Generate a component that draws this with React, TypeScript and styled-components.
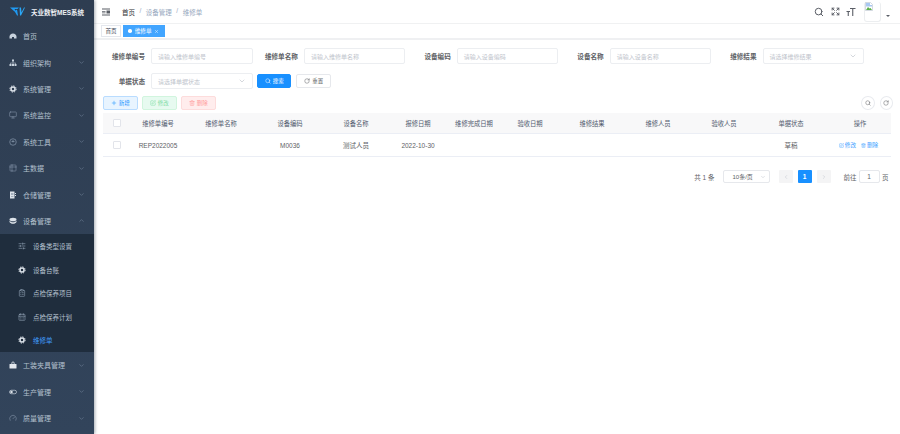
import React from 'react';
import styled, { createGlobalStyle } from 'styled-components';
import {
    ChevronDown, ChevronUp, ChevronLeft, ChevronRight, Search, RotateCw, Plus, SquarePen, Trash2,
    Expand, X, Monitor, Table2, SlidersHorizontal, ClipboardList, CalendarDays, Gauge,
} from 'lucide-react';

const GlobalStyle = createGlobalStyle`
    html, body { margin: 0; padding: 0; height: 100%; background: #fff; }
    body { font-family: "Liberation Sans", "Noto Sans CJK SC", sans-serif; overflow: hidden; }
    #root { height: 100%; }
`;

const Page = styled.div`
    display: flex;
    width: 900px;
    height: 434px;
    overflow: hidden;
`;

const Sidebar = styled.aside`
    width: 94px;
    flex: none;
    background: linear-gradient(#2e3d51, #32445b);
    box-shadow: 1px 0 3px rgba(0, 21, 41, 0.35);
    position: relative;
    z-index: 2;
    overflow: hidden;
`;

const Brand = styled.div`
    height: 23px;
    display: flex;
    align-items: center;
    padding-left: 10px;
    gap: 6px;
    color: #eef1f5;
    font-size: 6.5px;
    font-weight: 700;
    white-space: nowrap;
`;

const MenuRow = styled.div`
    height: 26.4px;
    display: flex;
    align-items: center;
    padding-left: 9px;
    color: #b4c0ce;
    font-size: 7px;
    gap: 6px;
    svg.chev { margin-left: auto; margin-right: 9px; color: #6f8096; }
`;

const SubMenu = styled.div`
    background: #1f2d3d;
`;

const SubRow = styled.div<{ $active?: boolean }>`
    height: 23.6px;
    display: flex;
    align-items: center;
    padding-left: 18px;
    gap: 7px;
    color: ${(p) => (p.$active ? '#409eff' : '#b4c0ce')};
    font-size: 6.5px;
    svg { color: #9fb0c3; }
`;

const Main = styled.main`
    flex: 1;
    min-width: 0;
    display: flex;
    flex-direction: column;
`;

const TopBar = styled.header`
    height: 23px;
    flex: none;
    display: flex;
    align-items: center;
    padding: 0 10px 0 8px;
    border-bottom: 1px solid #f0f1f2;
`;

const Crumbs = styled.nav`
    display: flex;
    gap: 4.5px;
    margin-left: 12px;
    font-size: 6.5px;
    color: #97a8be;
    b { font-weight: 400; color: #303133; }
`;

const TopIcons = styled.div`
    margin-left: auto;
    display: flex;
    align-items: center;
    gap: 6.5px;
    color: #5a5e66;
`;

const Avatar = styled.div`
    width: 17px;
    height: 20px;
    margin: 1px 0 0 1px;
    border-radius: 3px;
    border: 1px solid #eceef0;
    border-top: 0;
    box-sizing: border-box;
    line-height: 0;
`;

const Caret = styled.span`
    width: 0;
    height: 0;
    margin: 10px 0 0 -1px;
    border: 2px solid transparent;
    border-top-color: #5a5e66;
`;

const TagsBar = styled.div`
    height: 14px;
    flex: none;
    display: flex;
    align-items: center;
    gap: 2px;
    padding-left: 7px;
    border-bottom: 2px solid #eff0f2;
`;

const Tag = styled.span<{ $active?: boolean }>`
    height: 12px;
    display: flex;
    align-items: center;
    gap: 2px;
    box-sizing: border-box;
    padding: ${(p) => (p.$active ? '0 5px 0 4px' : '0 3.5px')};
    font-size: 5.6px;
    border: 1px solid ${(p) => (p.$active ? '#42a5ff' : '#e4e7ed')};
    background: ${(p) => (p.$active ? '#42a5ff' : '#fff')};
    color: ${(p) => (p.$active ? '#fff' : '#495060')};
`;

const Dot = styled.i`
    width: 3.5px;
    height: 3.5px;
    margin-right: 1px;
    border-radius: 50%;
    background: #fff;
`;

const Content = styled.section`
    padding: 8px 9px 0 9px;
`;

const FormGrid = styled.div`
    display: grid;
    grid-template-columns: repeat(5, 152.9px);
    row-gap: 9px;
`;

const Field = styled.label`
    display: flex;
    align-items: center;
    height: 16px;
`;

const FieldLabel = styled.span`
    width: 42px;
    margin-right: 6px;
    text-align: right;
    white-space: nowrap;
    font-size: 6.6px;
    font-weight: 700;
    color: #606266;
`;

const FieldBox = styled.span`
    width: 101.5px;
    height: 16px;
    box-sizing: border-box;
    padding: 0 6px;
    display: flex;
    align-items: center;
    justify-content: space-between;
    border: 1px solid #eceef1;
    border-radius: 2px;
    font-size: 6px;
    color: #c0c4cc;
`;

const FormActions = styled.div`
    grid-column: span 2;
    display: flex;
    align-items: center;
    gap: 5px;
    margin-left: 1px;
`;

const Btn = styled.button<{ $kind?: string }>`
    height: 14px;
    width: 34.5px;
    box-sizing: border-box;
    padding: 0;
    display: flex;
    align-items: center;
    justify-content: center;
    gap: 2px;
    font: inherit;
    font-size: 5.5px;
    border-radius: 2px;
    border: 1px solid ${(p) => ({
        search: '#1890ff', reset: '#e6e8ec', add: '#b9dcff', edit: '#d1f5de', del: '#fddcdc',
    }[p.$kind || 'reset'])};
    background: ${(p) => ({
        search: '#1890ff', reset: '#fff', add: '#e8f4ff', edit: '#e7faf0', del: '#ffeded',
    }[p.$kind || 'reset'])};
    color: ${(p) => ({
        search: '#fff', reset: '#606266', add: '#1890ff', edit: '#7fdca4', del: '#ff9a9a',
    }[p.$kind || 'reset'])};
`;

const Toolbar = styled.div`
    display: flex;
    align-items: center;
    gap: 4.5px;
    height: 14px;
    margin-top: 7px;
`;

const RoundButtons = styled.div`
    margin-left: auto;
    margin-right: -2px;
    display: flex;
    gap: 5px;
`;

const RoundBtn = styled.span`
    width: 13.5px;
    height: 14px;
    box-sizing: border-box;
    display: flex;
    align-items: center;
    justify-content: center;
    border: 1px solid #e9ebef;
    border-radius: 50%;
    color: #606266;
`;

const COLUMNS = '24px 62px 64px 74px 58px 66px 46px 66px 58px 74px 58px 76px 62px';

const Table = styled.div`
    margin-top: 3px;
    width: 788px;
`;

const HeadRow = styled.div`
    display: grid;
    grid-template-columns: ${COLUMNS};
    height: 21px;
    align-items: center;
    background: #f8f8f9;
    border-bottom: 1px solid #ebeef5;
    font-size: 6.3px;
    color: #515a6e;
    text-align: center;
    box-sizing: border-box;
`;

const BodyRow = styled(HeadRow)`
    height: 23px;
    background: #fff;
    color: #606266;
    font-size: 6.5px;
`;

const Check = styled.span`
    display: block;
    width: 7.5px;
    height: 7.5px;
    box-sizing: border-box;
    margin-left: 10px;
    background: #fff;
    border: 1px solid #e2e4ea;
    border-radius: 1px;
`;

const Ops = styled.span`
    display: flex;
    justify-content: center;
    gap: 5px;
    margin-right: 3px;
    color: #409eff;
    font-size: 5.6px;
    white-space: nowrap;
    span { display: flex; align-items: center; gap: 1px; }
`;

const Pager = styled.div`
    display: flex;
    align-items: center;
    justify-content: flex-end;
    height: 13px;
    margin-top: 13px;
    width: 785.5px;
    font-size: 6.5px;
    color: #606266;
`;

const SizeSelect = styled.span`
    width: 47px;
    height: 12.5px;
    box-sizing: border-box;
    margin: 0 9px 0 8px;
    padding: 0 3px 0 9px;
    display: flex;
    align-items: center;
    justify-content: space-between;
    border: 1px solid #e6e8ec;
    border-radius: 2px;
    font-size: 6px;
    svg { color: #c0c4cc; }
`;

const PageBtn = styled.span<{ $active?: boolean }>`
    width: 14px;
    height: 13px;
    margin-right: 5px;
    display: flex;
    align-items: center;
    justify-content: center;
    border-radius: 1px;
    font-weight: 700;
    background: ${(p) => (p.$active ? '#1890ff' : '#f4f4f5')};
    color: ${(p) => (p.$active ? '#fff' : '#c0c4cc')};
`;

const JumpLabel = styled.span`
    margin-left: 8px;
`;

const JumpBox = styled.span`
    width: 21px;
    height: 12.5px;
    box-sizing: border-box;
    margin: 0 2.5px 0 2px;
    display: flex;
    align-items: center;
    justify-content: center;
    border: 1px solid #e6e8ec;
    border-radius: 2px;
`;

const Logo = () => (
    <svg width="15" height="9" viewBox="0 0 30 18">
        <path d="M0 1h18l-3 3H9l2 3-2 2z" fill="#1f9bf5" />
        <path d="M9 8l5-3 2 12h-2z" fill="#1f9bf5" />
        <path d="M19 1h3l1 10 5-10h2l-8 16h-2z" fill="#2aa8f8" />
    </svg>
);

const HomeGlyph = () => (
    <svg width="8" height="8" viewBox="0 0 16 16" fill="#c8d2dd">
        <path d="M1 9c0-3 3-6 7-6s7 3 7 6v4H10V10H6v3H1z" />
    </svg>
);

const TreeGlyph = () => (
    <svg width="8" height="8" viewBox="0 0 16 16" fill="#c8d2dd">
        <rect x="6" y="1" width="4" height="4" />
        <rect x="1" y="10" width="4" height="4" />
        <rect x="6" y="10" width="4" height="4" />
        <rect x="11" y="10" width="4" height="4" />
        <path d="M7.500 5h1v2.500H13.500V10h-1V8.500h-4V10h-1V8.500h-4V10h-1V7.500h5z" />
    </svg>
);

const GearGlyph = () => (
    <svg width="8" height="8" viewBox="0 0 16 16" fill="none" stroke="#dde3ea">
        <circle cx="8" cy="8" r="4" strokeWidth="3" />
        <circle cx="8" cy="8" r="6.300" strokeWidth="2" strokeDasharray="2.600 2.350" />
    </svg>
);

const ToolGlyph = () => (
    <svg width="8" height="8" viewBox="0 0 16 16" fill="none" stroke="#8d9db1" strokeWidth="1.300">
        <circle cx="8" cy="8" r="6.500" />
        <path d="M8 4v5M5 7h6" />
    </svg>
);

const StoreGlyph = () => (
    <svg width="8" height="8" viewBox="0 0 16 16" fill="#dde3ea">
        <path d="M2 1h9v14H2zM12 4h2v2h-2zM12 8h2v2h-2z" />
        <path d="M4 4h5v1H4zM4 7h5v1H4zM4 10h5v1H4z" fill="#6d7c8f" />
    </svg>
);

const DiskGlyph = () => (
    <svg width="8" height="8" viewBox="0 0 16 16" fill="#dde3ea">
        <ellipse cx="8" cy="5" rx="7" ry="3.500" />
        <path d="M1 7c1 2.500 4 3.500 7 3.500S14 9.500 15 7v3c-1 2.500-4 3.500-7 3.500S2 12.500 1 10z" />
    </svg>
);

const LockGlyph = () => (
    <svg width="8" height="8" viewBox="0 0 16 16" fill="#e3e8ee">
        <path d="M5 6V4a3 3 0 0 1 6 0v2H9.500V4a1.500 1.500 0 0 0-3 0v2z" />
        <rect x="1" y="6" width="14" height="9" rx="1" />
    </svg>
);

const PillGlyph = () => (
    <svg width="8" height="8" viewBox="0 0 16 16">
        <rect x="1" y="4.500" width="14" height="7" rx="3.500" fill="none" stroke="#c8d2dd" strokeWidth="1.400" />
        <circle cx="5" cy="8" r="2.500" fill="#dde3ea" />
    </svg>
);

const CollapseGlyph = () => (
    <svg width="8" height="8" viewBox="0 0 16 16" fill="#5a5e66">
        <path d="M0 1h16v2H0zM0 13h16v2H0zM0 6h7v1.500H0zM0 9h7v1.500H0zM9 5h7v6H9z" />
    </svg>
);

const SizeGlyph = () => (
    <svg width="10" height="10" viewBox="0 0 20 20" fill="none" stroke="#5a5e66" strokeWidth="2.200">
        <path d="M8 3h11M13.500 3v15M1 9h7M4.500 9v9" />
    </svg>
);

const BrokenImage = () => (
    <svg width="8" height="9" viewBox="0 0 16 18">
        <path d="M1 1h10l4 4v12H1z" fill="#fff" stroke="#a9b4c2" />
        <path d="M2 2h8v4h4v3H2z" fill="#a9c8f2" />
        <path d="M2 16l4-6 3 3 2-1 3 4z" fill="#5bb04b" />
    </svg>
);

const topItems = [
    { label: '首页', icon: <HomeGlyph />, arrow: false },
    { label: '组织架构', icon: <TreeGlyph />, arrow: true },
    { label: '系统管理', icon: <GearGlyph />, arrow: true },
    { label: '系统监控', icon: <Monitor size={8} color="#8d9db1" strokeWidth={1.6} />, arrow: true },
    { label: '系统工具', icon: <ToolGlyph />, arrow: true },
    { label: '主数据', icon: <Table2 size={8} color="#8d9db1" strokeWidth={1.6} />, arrow: true },
    { label: '仓储管理', icon: <StoreGlyph />, arrow: true },
];

const subItems = [
    { label: '设备类型设置', icon: <SlidersHorizontal size={8} strokeWidth={1.6} /> },
    { label: '设备台账', icon: <GearGlyph /> },
    { label: '点检保养项目', icon: <ClipboardList size={8} strokeWidth={1.6} /> },
    { label: '点检保养计划', icon: <CalendarDays size={8} strokeWidth={1.6} /> },
    { label: '维修单', icon: <GearGlyph />, active: true },
];

const bottomItems = [
    { label: '工装夹具管理', icon: <LockGlyph /> },
    { label: '生产管理', icon: <PillGlyph /> },
    { label: '质量管理', icon: <Gauge size={8} color="#8d9db1" strokeWidth={1.6} /> },
];

const heads = ['维修单编号', '维修单名称', '设备编码', '设备名称', '报修日期', '维修完成日期', '验收日期', '维修结果', '维修人员', '验收人员', '单据状态', '操作'];

const fields = [
    { label: '维修单编号', hint: '请输入维修单编号' },
    { label: '维修单名称', hint: '请输入维修单名称' },
    { label: '设备编码', hint: '请输入设备编码' },
    { label: '设备名称', hint: '请输入设备名称' },
    { label: '维修结果', hint: '请选择维修结果', select: true },
    { label: '单据状态', hint: '请选择单据状态', select: true },
];

export default function App() {
    return (
        <Page>
            <GlobalStyle />
            <Sidebar>
                <Brand><Logo />天业数智MES系统</Brand>
                {topItems.map((m) => (
                    <MenuRow key={m.label}>
                        {m.icon}
                        {m.label}
                        {m.arrow && <ChevronDown className="chev" size={7} />}
                    </MenuRow>
                ))}
                <MenuRow>
                    <DiskGlyph />
                    设备管理
                    <ChevronUp className="chev" size={7} />
                </MenuRow>
                <SubMenu>
                    {subItems.map((s) => (
                        <SubRow key={s.label} $active={s.active}>{s.icon}{s.label}</SubRow>
                    ))}
                </SubMenu>
                {bottomItems.map((m) => (
                    <MenuRow key={m.label}>
                        {m.icon}
                        {m.label}
                        <ChevronDown className="chev" size={7} />
                    </MenuRow>
                ))}
            </Sidebar>
            <Main>
                <TopBar>
                    <CollapseGlyph />
                    <Crumbs><b>首页</b><span>/</span><span>设备管理</span><span>/</span><span>维修单</span></Crumbs>
                    <TopIcons>
                        <Search size={10} strokeWidth={2.4} />
                        <Expand size={9} strokeWidth={2.6} />
                        <SizeGlyph />
                        <Avatar><BrokenImage /></Avatar>
                        <Caret />
                    </TopIcons>
                </TopBar>
                <TagsBar>
                    <Tag>首页</Tag>
                    <Tag $active><Dot />维修单<X size={5} /></Tag>
                </TagsBar>
                <Content>
                    <FormGrid>
                        {fields.map((f) => (
                            <Field key={f.label}>
                                <FieldLabel>{f.label}</FieldLabel>
                                <FieldBox>
                                    {f.hint}
                                    {f.select && <ChevronDown size={8} />}
                                </FieldBox>
                            </Field>
                        ))}
                        <FormActions>
                            <Btn $kind="search"><Search size={6} />搜索</Btn>
                            <Btn $kind="reset"><RotateCw size={6} />重置</Btn>
                        </FormActions>
                    </FormGrid>
                    <Toolbar>
                        <Btn $kind="add"><Plus size={6} />新增</Btn>
                        <Btn $kind="edit"><SquarePen size={6} />修改</Btn>
                        <Btn $kind="del"><Trash2 size={6} />删除</Btn>
                        <RoundButtons>
                            <RoundBtn><Search size={6} /></RoundBtn>
                            <RoundBtn><RotateCw size={6} /></RoundBtn>
                        </RoundButtons>
                    </Toolbar>
                    <Table>
                        <HeadRow>
                            <Check />
                            {heads.map((h) => <span key={h}>{h}</span>)}
                        </HeadRow>
                        <BodyRow>
                            <Check />
                            <span>REP2022005</span>
                            <span />
                            <span>M0036</span>
                            <span>测试人员</span>
                            <span>2022-10-30</span>
                            <span />
                            <span />
                            <span />
                            <span />
                            <span />
                            <span>草稿</span>
                            <Ops>
                                <span><SquarePen size={5} />修改</span>
                                <span><Trash2 size={5} />删除</span>
                            </Ops>
                        </BodyRow>
                    </Table>
                    <Pager>
                        共 1 条
                        <SizeSelect>10条/页<ChevronDown size={6} /></SizeSelect>
                        <PageBtn><ChevronLeft size={6} /></PageBtn>
                        <PageBtn $active>1</PageBtn>
                        <PageBtn><ChevronRight size={6} /></PageBtn>
                        <JumpLabel>前往</JumpLabel>
                        <JumpBox>1</JumpBox>
                        页
                    </Pager>
                </Content>
            </Main>
        </Page>
    );
}
